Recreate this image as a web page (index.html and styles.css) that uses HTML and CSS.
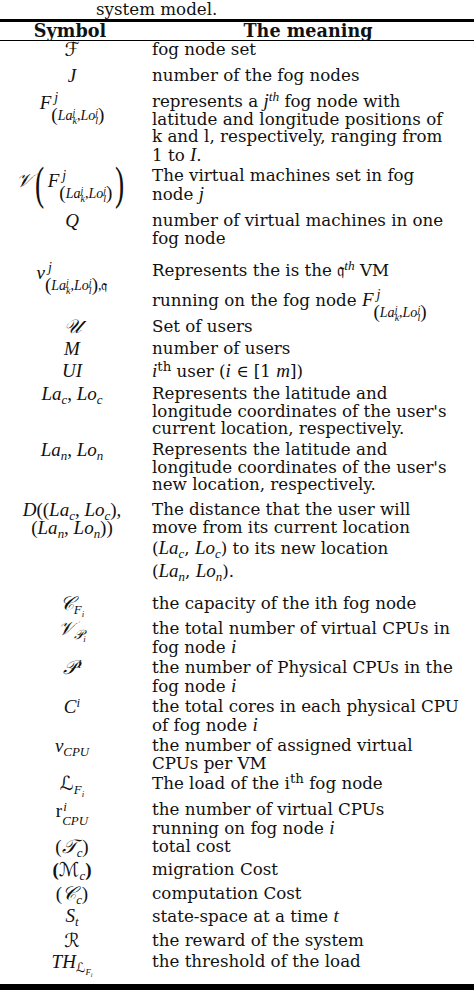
FILE: index.html
```html
<!DOCTYPE html>
<html>
<head>
<meta charset="utf-8">
<link rel="stylesheet" href="styles.css">
</head>
<body>
<div class="page">
  <div class="caption">system model.</div>
  <div class="table">
    <div class="hd sym">Symbol</div><div class="hd mean center">The meaning</div>

    <div class="sym"><span class="scr">ℱ</span></div>
    <div class="mean">fog node set</div>

    <div class="sym"><i>J</i></div>
    <div class="mean">number of the fog nodes</div>

    <div class="sym"><i>F</i><span class="ss"><span class="up"><i>j</i></span><span class="dn"><span class="p">(</span><i>La</i><span class="ss2"><span class="up2"><i>j</i></span><span class="dn2"><i>k</i></span></span>,<i>Lo</i><span class="ss2"><span class="up2"><i>j</i></span><span class="dn2"><i>l</i></span></span><span class="p">)</span></span></span></div>
    <div class="mean">represents a <i>j</i><sup><i>th</i></sup> fog node with<br>latitude and longitude positions of<br>k and l, respectively, ranging from<br>1 to <i>I</i>.</div>

    <div class="sym sym-v"><span class="scr">𝒱</span><span class="bigp">(</span><i>F</i><span class="ss"><span class="up"><i>j</i></span><span class="dn"><span class="p">(</span><i>La</i><span class="ss2"><span class="up2"><i>j</i></span><span class="dn2"><i>k</i></span></span>,<i>Lo</i><span class="ss2"><span class="up2"><i>j</i></span><span class="dn2"><i>l</i></span></span><span class="p">)</span></span></span><span class="bigp">)</span></div>
    <div class="mean">The virtual machines set in fog<br>node <i>j</i></div>

    <div class="sym"><i>Q</i></div>
    <div class="mean">number of virtual machines in one<br>fog node</div>

    <div class="sym"><i>v</i><span class="ss"><span class="up"><i>j</i></span><span class="dn"><span class="p">(</span><i>La</i><span class="ss2"><span class="up2"><i>j</i></span><span class="dn2"><i>k</i></span></span>,<i>Lo</i><span class="ss2"><span class="up2"><i>j</i></span><span class="dn2"><i>l</i></span></span><span class="p">)</span>,𝔮</span></span></div>
    <div class="mean">Represents the is the 𝔮<sup><i>th</i></sup> VM<span class="tall2">running on the fog node <i>F</i><span class="ss"><span class="up"><i>j</i></span><span class="dn"><span class="p">(</span><i>La</i><span class="ss2"><span class="up2"><i>j</i></span><span class="dn2"><i>k</i></span></span>,<i>Lo</i><span class="ss2"><span class="up2"><i>j</i></span><span class="dn2"><i>l</i></span></span><span class="p">)</span></span></span></span></div>

    <div class="sym"><span class="scr">𝒰</span></div>
    <div class="mean">Set of users</div>

    <div class="sym"><i>M</i></div>
    <div class="mean">number of users</div>

    <div class="sym"><i>UI</i></div>
    <div class="mean"><i>i</i><sup>th</sup> user (<i>i</i> ∈ [1 <i>m</i>])</div>

    <div class="sym"><i>La<sub>c</sub></i>, <i>Lo<sub>c</sub></i></div>
    <div class="mean">Represents the latitude and<br>longitude coordinates of the user's<br>current location, respectively.</div>

    <div class="sym"><i>La<sub>n</sub></i>, <i>Lo<sub>n</sub></i></div>
    <div class="mean">Represents the latitude and<br>longitude coordinates of the user's<br>new location, respectively.</div>

    <div class="sym"><i>D</i>((<i>La<sub>c</sub></i>, <i>Lo<sub>c</sub></i>),<br>(<i>La<sub>n</sub></i>, <i>Lo<sub>n</sub></i>))</div>
    <div class="mean">The distance that the user will<br>move from its current location<span class="tall">(<i>La<sub>c</sub></i>, <i>Lo<sub>c</sub></i>) to its new location</span><span class="tall">(<i>La<sub>n</sub></i>, <i>Lo<sub>n</sub></i>).</span></div>

    <div class="sym"><span class="scr">𝒞</span><sub><i>F<sub>i</sub></i></sub></div>
    <div class="mean">the capacity of the ith fog node</div>

    <div class="sym"><span class="scr">𝒱</span><sub><span class="scr">𝒫</span><sub><i>i</i></sub></sub></div>
    <div class="mean">the total number of virtual CPUs in<br>fog node <i>i</i></div>

    <div class="sym"><span class="scr">𝒫</span><sup><i>i</i></sup></div>
    <div class="mean">the number of Physical CPUs in the<br>fog node <i>i</i></div>

    <div class="sym"><i>C</i><sup><i>i</i></sup></div>
    <div class="mean">the total cores in each physical CPU<br>of fog node <i>i</i></div>

    <div class="sym"><i>v<sub>CPU</sub></i></div>
    <div class="mean">the number of assigned virtual<br>CPUs per VM</div>

    <div class="sym"><span class="scr">ℒ</span><sub><i>F<sub>i</sub></i></sub></div>
    <div class="mean">The load of the i<sup>th</sup> fog node</div>

    <div class="sym">r<span class="ss ss-sm"><span class="up"><i>i</i></span><span class="dn"><i>CPU</i></span></span></div>
    <div class="mean">the number of virtual CPUs<br>running on fog node <i>i</i></div>

    <div class="sym">(<span class="scr">𝒯</span><sub><i>c</i></sub>)</div>
    <div class="mean">total cost</div>

    <div class="sym"><b>(</b><span class="scr">ℳ</span><sub><i>c</i></sub><b>)</b></div>
    <div class="mean">migration Cost</div>

    <div class="sym">(<span class="scr">𝒞</span><sub><i>c</i></sub>)</div>
    <div class="mean">computation Cost</div>

    <div class="sym"><i>S<sub>t</sub></i></div>
    <div class="mean">state-space at a time <i>t</i></div>

    <div class="sym"><span class="scr">ℛ</span></div>
    <div class="mean">the reward of the system</div>

    <div class="sym"><i>TH</i><sub><span class="scr">ℒ</span><sub><i>F<sub>i</sub></i></sub></sub></div>
    <div class="mean">the threshold of the load</div>
  </div>
</div>
</body>
</html>
```

FILE: styles.css
```css
html, body {
  margin: 0;
  padding: 0;
  background: #fff;
}
body {
  font-family: "DejaVu Serif", "Liberation Serif", serif;
  color: #111;
  font-size: 16.7px;
}
.page {
  width: 474px;
  height: 990px;
  overflow: hidden;
}
.caption {
  line-height: 19px;
  height: 19px;
  padding-left: 96px;
}
.table {
  display: grid;
  grid-template-columns: 144px 1fr;
  grid-template-rows: 19px 26px 25px 75px 45px 50px 56px 22px 22px 23px 56px 60px 94px 25px 39px 39px 39px 38px 26px 37px 23px 24px 22px 25px 21px 31px;
  column-gap: 8px;
  border-top: 3px solid #000;
  border-bottom: 6px solid #000;
}
.hd {
  font-weight: bold;
  line-height: 18px;
  border-bottom: 1px solid #000;
  font-size: 17.6px;
}
.table .hd.sym {
  margin-right: -8px;
  padding-right: 12px;
  font-family: "DejaVu Serif", serif;
  font-size: 17.6px;
  line-height: 18px;
}
.sym {
  text-align: center;
  line-height: 17.6px;
  font-family: "Liberation Serif", "DejaVu Serif", serif;
  font-size: 19px;
  white-space: nowrap;
}
.mean {
  line-height: 17.6px;
  padding-right: 10px;
  white-space: nowrap;
}
.center {
  text-align: center;
}
.mean i {
  font-family: "Liberation Serif", serif;
  font-size: 19px;
}
.mean sup i,
.mean sub i,
.mean .ss i {
  font-size: inherit;
}
sub, sup {
  line-height: 0;
  font-size: 0.68em;
}
.mean sup {
  font-size: 0.8em;
}
sup {
  vertical-align: 0.45em;
}
sub {
  vertical-align: -0.3em;
}
.scr {
  font-family: "DejaVu Sans", "Noto Sans", sans-serif;
  font-style: italic;
  font-size: 1.02em;
}
.scr + sup {
  margin-left: 1px;
}
.ss {
  display: inline-flex;
  flex-direction: column;
  vertical-align: 7px;
  line-height: 12px;
  text-align: left;
  font-size: 14px;
  font-family: "Liberation Serif", serif;
}
.ss .up {
  height: 17px;
  padding-left: 3px;
}
.ss .dn {
  white-space: nowrap;
}
.ss-sm {
  vertical-align: 6px;
  font-size: 13px;
}
.ss-sm .up {
  height: 14px;
  padding-left: 1px;
}
.ss2 {
  display: inline-flex;
  flex-direction: column;
  vertical-align: 4px;
  line-height: 7px;
  font-size: 10px;
}
.up2 {
  height: 8px;
}
.p {
  font-size: 19px;
  line-height: 0;
  vertical-align: -1px;
}
.bigp {
  font-size: 46px;
  font-weight: 200;
  vertical-align: -12px;
  transform: scaleX(0.6);
  display: inline-block;
  line-height: 0;
}
.sym-v {
  padding-top: 3px;
}
.tall {
  display: block;
  line-height: 21px;
  margin-top: 1px;
}
.tall2 {
  display: block;
  line-height: 21px;
  margin-top: 9px;
}
```
